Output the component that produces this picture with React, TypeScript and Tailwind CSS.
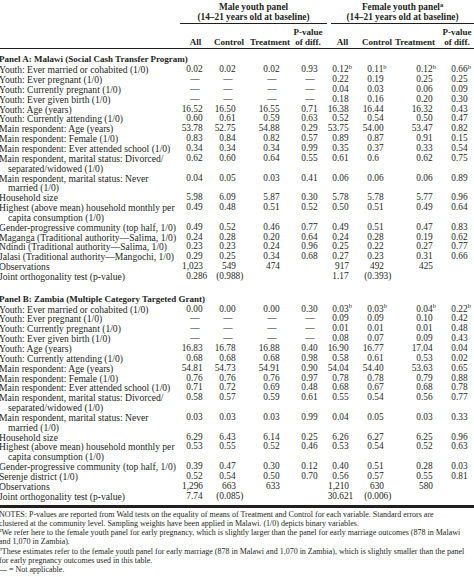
import React from "react";

type Row = { label: string[]; vals: string[] };

const D = "—";

const panelA: Row[] = [
    { label: ["Youth: Ever married or cohabited (1/0)"], vals: ["0.02", "0.02", "0.02", "0.93", "0.12b", "0.11b", "0.12b", "0.66b"] },
    { label: ["Youth: Ever pregnant (1/0)"], vals: [D, D, D, D, "0.22", "0.19", "0.25", "0.25"] },
    { label: ["Youth: Currently pregnant (1/0)"], vals: [D, D, D, D, "0.04", "0.03", "0.06", "0.09"] },
    { label: ["Youth: Ever given birth (1/0)"], vals: [D, D, D, D, "0.18", "0.16", "0.20", "0.30"] },
    { label: ["Youth: Age (years)"], vals: ["16.52", "16.50", "16.55", "0.71", "16.38", "16.44", "16.32", "0.43"] },
    { label: ["Youth: Currently attending (1/0)"], vals: ["0.60", "0.61", "0.59", "0.63", "0.52", "0.54", "0.50", "0.47"] },
    { label: ["Main respondent: Age (years)"], vals: ["53.78", "52.75", "54.88", "0.29", "53.75", "54.00", "53.47", "0.82"] },
    { label: ["Main respondent: Female (1/0)"], vals: ["0.83", "0.84", "0.82", "0.57", "0.89", "0.87", "0.91", "0.15"] },
    { label: ["Main respondent: Ever attended school (1/0)"], vals: ["0.34", "0.34", "0.34", "0.99", "0.35", "0.37", "0.33", "0.54"] },
    { label: ["Main respondent, marital status: Divorced/", "separated/widowed (1/0)"], vals: ["0.62", "0.60", "0.64", "0.55", "0.61", "0.6", "0.62", "0.75"] },
    { label: ["Main respondent, marital status: Never", "married (1/0)"], vals: ["0.04", "0.05", "0.03", "0.41", "0.06", "0.06", "0.06", "0.89"] },
    { label: ["Household size"], vals: ["5.98", "6.09", "5.87", "0.30", "5.78", "5.78", "5.77", "0.96"] },
    { label: ["Highest (above mean) household monthly per", "capita consumption (1/0)"], vals: ["0.49", "0.48", "0.51", "0.52", "0.50", "0.51", "0.49", "0.64"] },
    { label: ["Gender-progressive community (top half, 1/0)"], vals: ["0.49", "0.52", "0.46", "0.77", "0.49", "0.51", "0.47", "0.83"] },
    { label: ["Maganga (Traditional authority—Salima, 1/0)"], vals: ["0.24", "0.28", "0.20", "0.64", "0.24", "0.28", "0.19", "0.62"] },
    { label: ["Ndindi (Traditional authority—Salima, 1/0)"], vals: ["0.23", "0.23", "0.24", "0.96", "0.25", "0.22", "0.27", "0.77"] },
    { label: ["Jalasi (Traditional authority—Mangochi, 1/0)"], vals: ["0.29", "0.25", "0.34", "0.68", "0.27", "0.23", "0.31", "0.66"] },
    { label: ["Observations"], vals: ["1,023", "549", "474", "", "917", "492", "425", ""] },
    { label: ["Joint orthogonality test (p-value)"], vals: ["0.286", "(0.988)", "", "", "1.17", "(0.393)", "", ""] },
];

const panelB: Row[] = [
    { label: ["Youth: Ever married or cohabited (1/0)"], vals: ["0.00", "0.00", "0.00", "0.30", "0.03b", "0.03b", "0.04b", "0.22b"] },
    { label: ["Youth: Ever pregnant (1/0)"], vals: [D, D, D, D, "0.09", "0.09", "0.10", "0.42"] },
    { label: ["Youth: Currently pregnant (1/0)"], vals: [D, D, D, D, "0.01", "0.01", "0.01", "0.48"] },
    { label: ["Youth: Ever given birth (1/0)"], vals: [D, D, D, D, "0.08", "0.07", "0.09", "0.43"] },
    { label: ["Youth: Age (years)"], vals: ["16.83", "16.78", "16.88", "0.40", "16.90", "16.77", "17.04", "0.04"] },
    { label: ["Youth: Currently attending (1/0)"], vals: ["0.68", "0.68", "0.68", "0.98", "0.58", "0.61", "0.53", "0.02"] },
    { label: ["Main respondent: Age (years)"], vals: ["54.81", "54.73", "54.91", "0.90", "54.04", "54.40", "53.63", "0.65"] },
    { label: ["Main respondent: Female (1/0)"], vals: ["0.76", "0.76", "0.76", "0.97", "0.78", "0.78", "0.79", "0.88"] },
    { label: ["Main respondent: Ever attended school (1/0)"], vals: ["0.71", "0.72", "0.69", "0.48", "0.68", "0.67", "0.68", "0.78"] },
    { label: ["Main respondent, marital status: Divorced/", "separated/widowed (1/0)"], vals: ["0.58", "0.57", "0.59", "0.61", "0.55", "0.54", "0.56", "0.77"] },
    { label: ["Main respondent, marital status: Never", "married (1/0)"], vals: ["0.03", "0.03", "0.03", "0.99", "0.04", "0.05", "0.03", "0.33"] },
    { label: ["Household size"], vals: ["6.29", "6.43", "6.14", "0.25", "6.26", "6.27", "6.25", "0.96"] },
    { label: ["Highest (above mean) household monthly per", "capita consumption (1/0)"], vals: ["0.53", "0.55", "0.52", "0.46", "0.53", "0.54", "0.52", "0.63"] },
    { label: ["Gender-progressive community (top half, 1/0)"], vals: ["0.39", "0.47", "0.30", "0.12", "0.40", "0.51", "0.28", "0.03"] },
    { label: ["Serenje district (1/0)"], vals: ["0.52", "0.54", "0.50", "0.70", "0.56", "0.57", "0.55", "0.81"] },
    { label: ["Observations"], vals: ["1,296", "663", "633", "", "1,210", "630", "580", ""] },
    { label: ["Joint orthogonality test (p-value)"], vals: ["7.74", "(0.085)", "", "", "30.621", "(0.006)", "", ""] },
];

const grid = "grid grid-cols-[176px_33px_44px_38px_31px_35px_49px_35px_33px]";

// decimal-aligned number: integer part right of a 15px box, fraction after it
function Num({ v }: { v: string }) {
    if (!v) return null;
    if (v === D) return <span className="block w-[38px] text-center">{D}</span>;
    let s = v;
    let sup = false;
    if (s.endsWith("b")) {
        sup = true;
        s = s.slice(0, -1);
    }
    const i = s.indexOf(".");
    if (i < 0) return <span className="block w-[27px] text-right">{s}</span>;
    return (
        <span className="flex whitespace-nowrap">
            <span className="w-[15px] shrink-0 text-right">{s.slice(0, i)}</span>
            <span>
                {s.slice(i)}
                {sup && <sup className="text-[6.5px]">b</sup>}
            </span>
        </span>
    );
}

// header box is twice the distance from column start to the label's centre
function Head({ lines, w }: { lines: string[]; w: string }) {
    return (
        <div className={`flex ${w} flex-col items-center self-end whitespace-nowrap`}>
            {lines.map((l) => (
                <span key={l}>{l}</span>
            ))}
        </div>
    );
}

function Rows({ rows }: { rows: Row[] }) {
    return (
        <>
            {rows.map((r, idx) => (
                <div key={idx} className={grid}>
                    <div className="-ml-px whitespace-nowrap text-[9.6px]">
                        {r.label.map((l, j) => (
                            <div key={j} className={j > 0 ? "pl-[9px]" : ""}>
                                {l}
                            </div>
                        ))}
                    </div>
                    {r.vals.map((v, j) => (
                        <div key={j}>
                            <Num v={v} />
                        </div>
                    ))}
                </div>
            ))}
        </>
    );
}

export default function App() {
    return (
        <div className="h-[577px] w-[474px] overflow-hidden bg-white font-['Liberation_Serif',serif] text-[9.3px] leading-[9.85px] text-[#231f20]">
            {/* group headers */}
            <div className="flex pt-[3px] font-bold leading-[9.6px]">
                <div className="w-[180px] shrink-0" />
                <div className="flex w-[147px] shrink-0 flex-col items-center border-b border-[#231f20] pb-px">
                    <span>Male youth panel</span>
                    <span>(14–21 years old at baseline)</span>
                </div>
                <div className="w-[4px] shrink-0" />
                <div className="flex flex-1 flex-col items-center border-b border-[#231f20] pb-px">
                    <span>
                        Female youth panel<sup className="text-[6.5px]">a</sup>
                    </span>
                    <span>(14–21 years old at baseline)</span>
                </div>
            </div>

            {/* column headers */}
            <div className={`${grid} border-b-[1.5px] border-[#231f20] pt-[4px] pb-px text-[9px] font-bold leading-[9.6px]`}>
                <div />
                <Head lines={["All"]} w="w-[39px]" />
                <Head lines={["Control"]} w="w-[40px]" />
                <Head lines={["Treatment"]} w="w-[34px]" />
                <Head lines={["P-value", "of diff."]} w="w-[34px]" />
                <Head lines={["All"]} w="w-[41px]" />
                <Head lines={["Control"]} w="w-[40px]" />
                <Head lines={["Treatment"]} w="w-[18px]" />
                <Head lines={["P-value", "of diff."]} w="w-[32px]" />
            </div>

            <div className="-ml-px mt-[6px] text-[9px] font-bold">Panel A: Malawi (Social Cash Transfer Program)</div>
            <Rows rows={panelA} />

            <div className="-ml-px mt-[13px] text-[9px] font-bold">Panel B: Zambia (Multiple Category Targeted Grant)</div>
            <Rows rows={panelB} />

            <div className="mt-[3px] h-[3px] bg-[#231f20]" />

            <div className="-ml-px whitespace-nowrap pt-[2px] text-[8px] leading-[9.3px]">
                <div>
                    NOTES: P-values are reported from Wald tests on the equality of means of Treatment and Control for each variable. Standard errors are
                </div>
                <div>clustered at the community level. Sampling weights have been applied in Malawi. (1/0) depicts binary variables.</div>
                <div>
                    <sup className="text-[5.5px]">a</sup>We refer here to the female youth panel for early pregnancy, which is slightly larger than the panel for early marriage outcomes (878 in Malawi
                </div>
                <div>and 1,070 in Zambia).</div>
                <div>
                    <sup className="text-[5.5px]">b</sup>These estimates refer to the female youth panel for early marriage (878 in Malawi and 1,070 in Zambia), which is slightly smaller than the panel
                </div>
                <div>for early pregnancy outcomes used in this table.</div>
                <div>— = Not applicable.</div>
            </div>
        </div>
    );
}
